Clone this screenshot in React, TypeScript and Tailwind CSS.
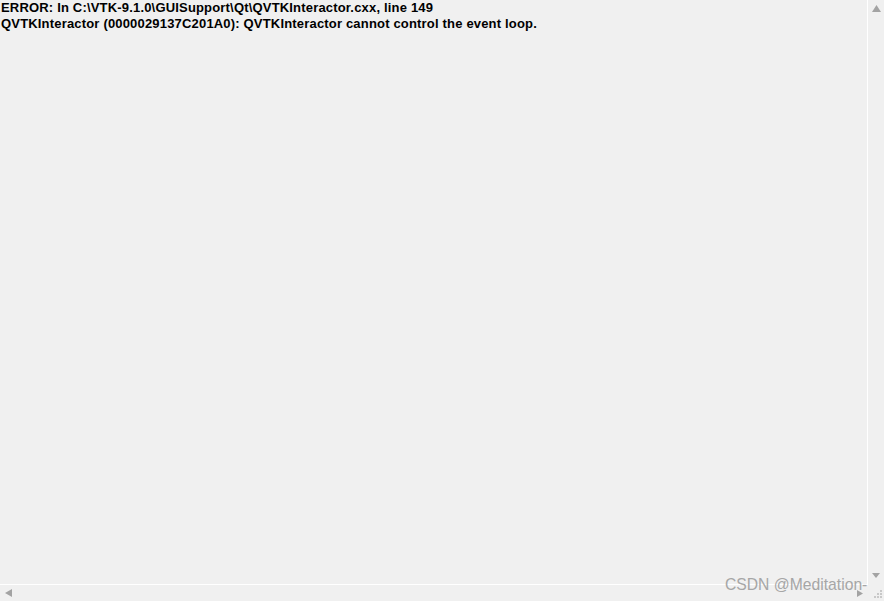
import React from "react";

export default function App() {
  return (
    <div className="relative w-[884px] h-[601px] bg-[#f0f0f0] overflow-hidden flex flex-col">
      <div className="flex flex-1 min-h-0">
        <div className="flex-1 border-r border-white pl-[1px]">
          <div
            className="text-[13px] leading-[16px] font-bold tracking-[0.18px] text-black whitespace-pre"
            style={{ fontFamily: '"Liberation Sans", Arial, sans-serif' }}
          >
            <div>ERROR: In C:\VTK-9.1.0\GUISupport\Qt\QVTKInteractor.cxx, line 149</div>
            <div>QVTKInteractor (0000029137C201A0): QVTKInteractor cannot control the event loop.</div>
          </div>
        </div>
        <div className="w-[16px] flex flex-col items-center justify-between pt-[5px] pb-[6px]">
          <svg width="9" height="7" viewBox="0 0 9 7">
            <polygon points="4.5,0 9,7 0,7" fill="#a3a3a3" />
          </svg>
          <svg width="8" height="5" viewBox="0 0 8 5">
            <polygon points="0,0 8,0 4,5" fill="#a3a3a3" />
          </svg>
        </div>
      </div>
      <div className="h-[17px] flex">
        <div className="w-[868px] border-t border-white flex items-center justify-between pl-[5px] pr-[5px]">
          <svg width="7" height="8" viewBox="0 0 7 8">
            <polygon points="7,0 7,8 0,4" fill="#a3a3a3" />
          </svg>
          <svg width="6" height="7" viewBox="0 0 6 7">
            <polygon points="0,0 6,3.5 0,7" fill="#a3a3a3" />
          </svg>
        </div>
        <div className="flex-1 flex items-end justify-end pr-[2px] pb-[1px]">
          <svg width="10" height="10" viewBox="0 0 10 10">
            <rect x="8" y="0" width="2" height="2" fill="#c8c8c8" />
            <rect x="5" y="3" width="2" height="2" fill="#c8c8c8" />
            <rect x="8" y="3" width="2" height="2" fill="#c8c8c8" />
            <rect x="2" y="6" width="2" height="2" fill="#c8c8c8" />
            <rect x="5" y="6" width="2" height="2" fill="#c8c8c8" />
            <rect x="8" y="6" width="2" height="2" fill="#c8c8c8" />
          </svg>
        </div>
      </div>
      <div
        className="absolute left-[725px] top-[576px] text-[15.7px] leading-[18px] text-[#a6a6a6] whitespace-pre"
        style={{ fontFamily: '"Liberation Sans", Arial, sans-serif' }}
      >
        CSDN @Meditation-
      </div>
    </div>
  );
}
